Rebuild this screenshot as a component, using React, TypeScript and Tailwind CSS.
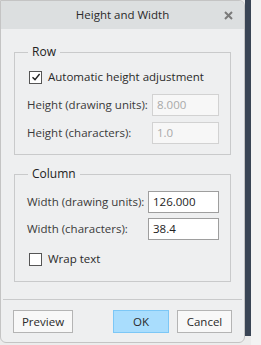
import React from 'react';

const font = { fontFamily: '"Open Sans", "Noto Sans", Arial, sans-serif' };

function Check({ checked }: { checked?: boolean }) {
  return (
    <span className="flex h-[13px] w-[13px] items-center justify-center border border-[#555] bg-white">
      {checked && (
        <svg width="10" height="10" viewBox="0 0 10 10">
          <path d="M1.5 5.2 L4 7.6 L8.6 2" fill="none" stroke="#222" strokeWidth="1.4" />
        </svg>
      )}
    </span>
  );
}

function Field({ label, value, width, disabled }: { label: string; value: string; width: string; disabled?: boolean }) {
  return (
    <div className="flex h-[22px] items-center justify-between pl-[12px] pr-[11px]">
      <span className="whitespace-nowrap text-[11.5px] text-[#3a3a3a]">{label}</span>
      <div
        className={
          disabled
            ? `flex h-[22px] ${width} items-center border border-[#d2d2d2] bg-[#f7f7f7] px-[4px] text-[11.5px] text-[#a9a9a9]`
            : `flex h-[22px] ${width} items-center border border-[#9e9e9e] bg-white px-[4px] text-[11.5px] text-[#222]`
        }
      >
        {value}
      </div>
    </div>
  );
}

function Group({ title, children, className }: { title: string; children: React.ReactNode; className?: string }) {
  return (
    <div className={`relative mx-[13px] border border-[#c9cacb] ${className ?? ''}`}>
      <span className="absolute left-[13px] top-[-10px] bg-[#eeeff0] px-[4px] text-[12px] leading-[18px] text-[#222]">
        {title}
      </span>
      {children}
    </div>
  );
}

export default function App() {
  return (
    <div className="flex h-[345px] w-[261px] bg-[#ececec]" style={font}>
      <div className="flex h-[343px] w-[245px] flex-col overflow-hidden rounded-tr-[6px] rounded-b-[6px] border border-[#c4c4c4] bg-[#eeeff0]">
        {/* Title bar */}
        <div className="relative flex h-[28px] shrink-0 items-center justify-center bg-[#dcdfe0]">
          <span className="text-[11.5px] text-[#2a2a2a]">Height and Width</span>
          <svg className="absolute right-[11px] top-[10px]" width="9" height="9" viewBox="0 0 9 9">
            <path d="M1 1 L8 8 M8 1 L1 8" stroke="#7a7a7a" strokeWidth="2" />
          </svg>
        </div>

        {/* Row */}
        <Group title="Row" className="mt-[23px] pt-[16px] pb-[10px]">
          <div className="flex h-[16px] items-center gap-[6px] pl-[14px]">
            <Check checked />
            <span className="whitespace-nowrap text-[11.5px] text-[#2a2a2a]">Automatic height adjustment</span>
          </div>
          <div className="mt-[9px] flex flex-col gap-[6px]">
            <Field label="Height (drawing units):" value="8.000" width="w-[67px]" disabled />
            <Field label="Height (characters):" value="1.0" width="w-[67px]" disabled />
          </div>
        </Group>

        {/* Column */}
        <Group title="Column" className="mt-[19px] pt-[16px] pb-[14px]">
          <div className="flex flex-col gap-[5px]">
            <Field label="Width (drawing units):" value="126.000" width="w-[71px]" />
            <Field label="Width (characters):" value="38.4" width="w-[71px]" />
          </div>
          <div className="mt-[11px] flex h-[16px] items-center gap-[6px] pl-[14px]">
            <Check />
            <span className="text-[11.5px] text-[#2a2a2a]">Wrap text</span>
          </div>
        </Group>

        <div className="mx-[2px] mt-[17px] h-px bg-[#c9cacb]" />

        {/* Buttons */}
        <div className="mt-[10px] flex h-[23px] items-stretch px-[12px] text-[11.5px] text-[#2a2a2a]">
          <button className="w-[60px] border border-[#b4b4b4] bg-[#f8f8f8]">Preview</button>
          <div className="flex-1" />
          <button className="w-[56px] border border-[#7cc7f6] bg-[#a9ddfd]">OK</button>
          <button className="ml-[8px] w-[55px] border border-[#b4b4b4] bg-[#f8f8f8]">Cancel</button>
        </div>
      </div>
      <div className="h-[336px] w-[6px] bg-[#3a4555]" />
      <div className="flex-1 bg-[#f3f3f3]" />
    </div>
  );
}
